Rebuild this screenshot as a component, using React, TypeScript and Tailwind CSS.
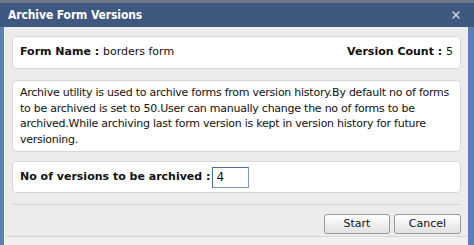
import { X } from "lucide-react";

const font = { fontFamily: '"DejaVu Sans", Verdana, sans-serif' };
const titleFont = { fontFamily: '"DejaVu Sans Condensed", "DejaVu Sans", Tahoma, sans-serif' };

export default function App() {
  return (
    <div className="w-[474px] h-[245px] bg-[#6d7785] pt-[3px] flex flex-col overflow-hidden" style={font}>
      <div className="flex flex-col flex-1 bg-[#5b80b4] pl-[4px] pr-[6px]">
        <div className="h-[24px] -ml-[4px] -mr-[6px] bg-[#3f5880] flex items-center justify-between px-[8px]">
          <span className="text-white font-bold text-[12px] tracking-[-0.1px]" style={titleFont}>
            Archive Form Versions
          </span>
          <X className="w-[12px] h-[12px] text-[#c9d2de] mr-[4px]" strokeWidth={3} />
        </div>
        <div className="flex-1 bg-[#ececec] border-l border-[#f7f4ee] flex flex-col pl-[7px] pr-[7px] pt-[9px] text-[11px] text-[#111]">
          <div className="bg-white border border-[#d8d8d8] rounded-[4px] h-[33px] flex items-center justify-between px-[7px]">
            <div>
              <span className="font-bold">Form Name : </span>borders form
            </div>
            <div>
              <span className="font-bold">Version Count : </span>5
            </div>
          </div>
          <div className="bg-white border border-[#d8d8d8] rounded-[4px] mt-[11px] px-[7px] pt-[4px] pb-[4px] leading-[15.5px] tracking-[-0.25px]">
            Archive utility is used to archive forms from version history.By default no of forms to be archived is set to 50.User can manually change the no of forms to be archived.While archiving last form version is kept in version history for future versioning.
          </div>
          <div className="bg-white border border-[#d8d8d8] rounded-[4px] mt-[9px] h-[32px] flex items-center px-[7px]">
            <span className="font-bold">No of versions to be archived :</span>
            <input
              defaultValue="4"
              className="ml-[2px] w-[37px] h-[21px] border border-[#7a9cc0] border-t-[#4d6f96] border-l-[#4d6f96] px-[3px] text-[12px] outline-none"
              style={font}
            />
          </div>
          <div className="mt-[11px] border-t border-[#d6d6d6] flex justify-end gap-[4px] pt-[9px]">
            <button className="w-[66px] h-[20px] rounded-[3px] border border-[#9a9a9a] bg-gradient-to-b from-white to-[#e2e2e2] text-[11px]">Start</button>
            <button className="w-[67px] h-[20px] rounded-[3px] border border-[#9a9a9a] bg-gradient-to-b from-white to-[#e2e2e2] text-[11px]">Cancel</button>
          </div>
          <div className="mt-[2px] -ml-[7px] -mr-[7px] flex-1 border-t border-[#d6d6d6] bg-[#f0f0f0]" />
        </div>
      </div>
    </div>
  );
}
